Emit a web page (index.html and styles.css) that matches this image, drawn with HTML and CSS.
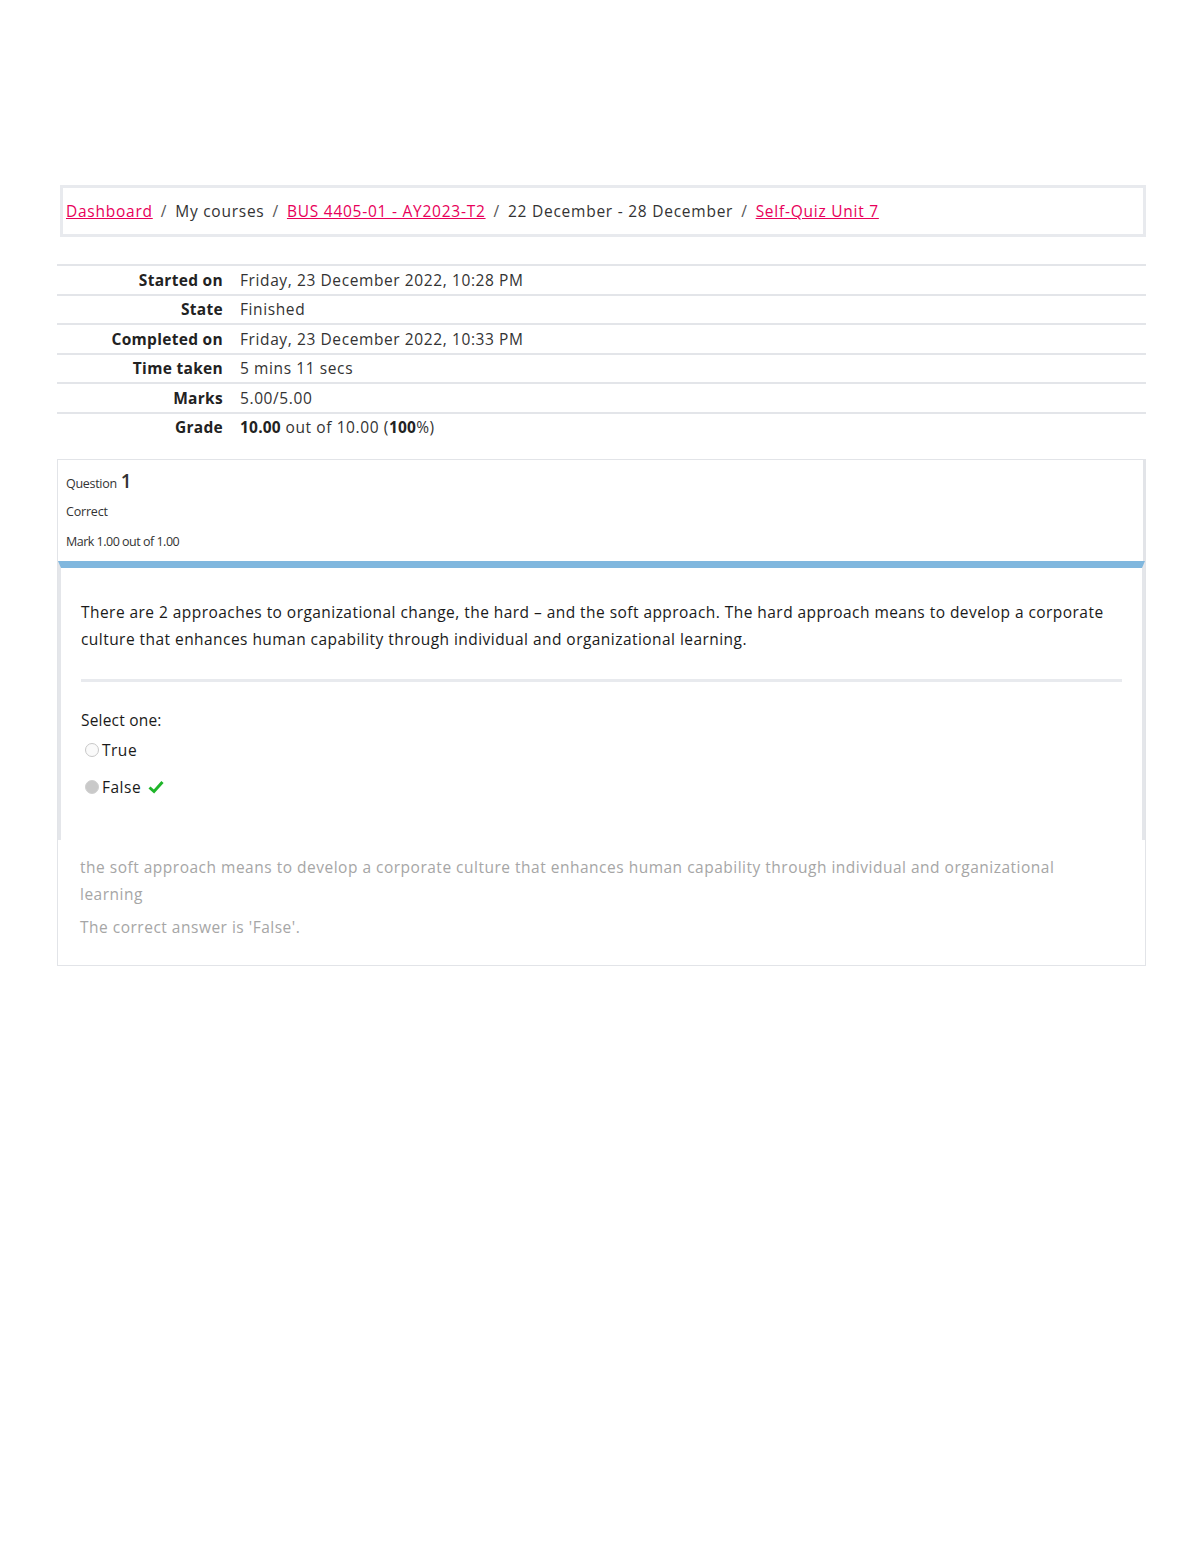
FILE: index.html
```html
<!DOCTYPE html>
<html>
<head>
<meta charset="utf-8">
<link rel="stylesheet" href="styles.css">
</head>
<body>
<div class="page">
  <nav class="crumbs">
    <a href="#">Dashboard</a><span class="sep">/</span><span>My courses</span><span class="sep">/</span><a href="#">BUS 4405-01 - AY2023-T2</a><span class="sep">/</span><span>22 December - 28 December</span><span class="sep">/</span><a href="#">Self-Quiz Unit 7</a>
  </nav>

  <table class="summary">
    <tr><th>Started on</th><td>Friday, 23 December 2022, 10:28 PM</td></tr>
    <tr><th>State</th><td>Finished</td></tr>
    <tr><th>Completed on</th><td>Friday, 23 December 2022, 10:33 PM</td></tr>
    <tr><th>Time taken</th><td>5 mins 11 secs</td></tr>
    <tr><th>Marks</th><td>5.00/5.00</td></tr>
    <tr><th>Grade</th><td><b>10.00</b> out of 10.00 (<b>100</b>%)</td></tr>
  </table>

  <div class="question">
    <div class="info">
      <div class="qno">Question <span class="num">1</span></div>
      <div class="state">Correct</div>
      <div class="grade">Mark 1.00 out of 1.00</div>
    </div>
    <div class="content">
      <p class="qtext">There are 2 approaches to organizational change, the hard – and the soft approach. The hard approach means to develop a corporate culture that enhances human capability through individual and organizational learning.</p>
      <div class="ablock">
        <div class="prompt">Select one:</div>
        <div class="opt"><span class="radio"></span><span>True</span></div>
        <div class="opt"><span class="radio checked"></span><span>False</span>
          <svg class="tick" width="16" height="14" viewBox="0 0 16 14"><path d="M1.5 7.5 L6 11.5 L14.5 2" fill="none" stroke="#1fb52a" stroke-width="3"/></svg>
        </div>
      </div>
    </div>
    <div class="feedback">
      <p>the soft approach means to develop a corporate culture that enhances human capability through individual and organizational learning</p>
      <p class="right">The correct answer is 'False'.</p>
    </div>
  </div>
</div>
</body>
</html>
```

FILE: styles.css
```css
html, body {
  margin: 0;
  padding: 0;
  background: #ffffff;
}
body {
  font-family: "Open Sans", "Noto Sans", sans-serif;
  color: #1d2125;
}
.page {
  width: 1089px;
  margin-left: 57px;
  padding-top: 185px;
}
.crumbs {
  margin-left: 3px;
  box-sizing: border-box;
  width: 1086px;
  height: 52px;
  border: 3px solid #e8eaee;
  padding: 0 3px;
  display: flex;
  align-items: center;
  font-size: 15.5px;
  color: #333;
  letter-spacing: 0.75px;
}
.crumbs a {
  color: #e8005a;
  text-decoration: underline;
}
.crumbs .sep {
  margin: 0 8px;
  color: #555;
}
.summary {
  margin-top: 27px;
  width: 100%;
  border-collapse: collapse;
  font-size: 15.5px;
  letter-spacing: 0.3px;
}
.summary tr {
  border-top: 2px solid #e3e5e9;
}
.summary th {
  width: 166px;
  text-align: right;
  font-weight: 700;
  padding: 0 9px 0 0;
  height: 27.5px;
  color: #222;
}
.summary td {
  padding: 0 0 0 8px;
  color: #333;
  letter-spacing: 0.6px;
}
.summary b {
  font-weight: 700;
  color: #222;
  letter-spacing: 0.2px;
}
.question {
  margin-top: 18px;
  box-sizing: border-box;
  width: 1089px;
  border: 1px solid #e2e4e8;
}
.info {
  height: 101px;
  padding: 8px 8px 0 8px;
  box-sizing: border-box;
  font-size: 12.5px;
  color: #333;
  border-right: 2px solid #e2e4e8;
}
.qno {
  height: 35px;
  display: flex;
  align-items: baseline;
  letter-spacing: -0.3px;
}
.qno .num {
  font-size: 19px;
  font-weight: 600;
  margin-left: 4px;
}
.state {
  height: 30px;
  letter-spacing: -0.2px;
}
.grade {
  letter-spacing: -0.5px;
}
.content {
  border-top: 7px solid #80b7de;
  border-left: 3px solid #e4e6ea;
  border-right: 3px solid #e4e6ea;
  padding: 31px 20px 0 20px;
  height: 279px;
  box-sizing: border-box;
  font-size: 15.5px;
  color: #1a1a1a;
}
.qtext {
  margin: 0;
  line-height: 27px;
  letter-spacing: 0.45px;
  padding-bottom: 26px;
  border-bottom: 3px solid #e8eaee;
}
.ablock {
  padding-top: 27px;
}
.prompt {
  height: 22px;
  letter-spacing: 0.2px;
}
.opt {
  display: flex;
  align-items: center;
  height: 37px;
  padding-left: 4px;
  gap: 3px;
  letter-spacing: 0.5px;
}
.radio {
  width: 14px;
  height: 14px;
  border-radius: 50%;
  border: 1px solid #c8c8c8;
  background: #fafafa;
  box-sizing: border-box;
}
.radio.checked {
  background: #c9c9c9;
  border-color: #d0d0d0;
}
.tick {
  margin-left: 4px;
}
.feedback {
  padding: 14px 62px 24px 22px;
  font-size: 15.5px;
  color: #a6a6a6;
  line-height: 27px;
  letter-spacing: 0.5px;
}
.feedback p {
  margin: 0;
}
.feedback .right {
  margin-top: 6px;
}
```
